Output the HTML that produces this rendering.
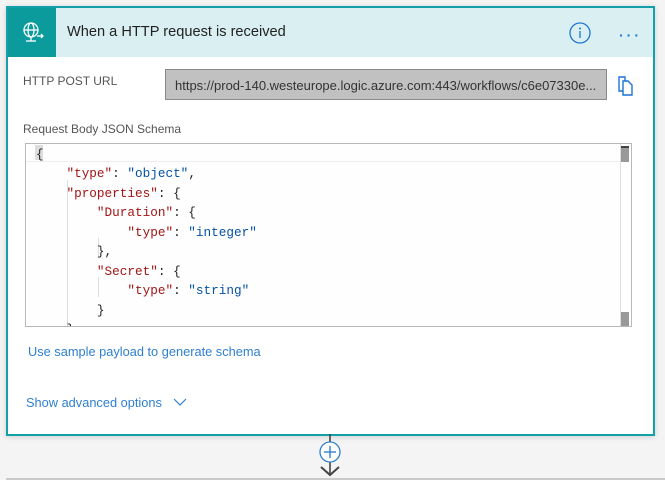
<!DOCTYPE html>
<html><head><style>
body{margin:0;width:665px;height:480px;background:#f4f4f4;position:relative;overflow:hidden;font-family:"Liberation Sans",sans-serif}
.card{position:absolute;left:6px;top:6px;width:645px;height:426px;border:2px solid #12a0aa;background:#fff;box-shadow:0 1px 6px rgba(0,0,0,.15)}
.hdr{position:absolute;left:0;top:0;width:645px;height:49px;background:#d9eff2}
.ico{position:absolute;left:0;top:0;width:48px;height:49px;background:#0b9b9c}
.title{position:absolute;left:59px;top:16px;font-size:14.6px;color:#222}
.lbl{position:absolute;font-size:12px;color:#555}
.url{position:absolute;left:157px;top:61px;width:442px;height:31px;background:#c1c1c1;border:1px solid #8a8a8a;box-sizing:border-box;font-size:13px;color:#333;padding:8px 0 0 9px}
.ed{position:absolute;left:17px;top:135px;width:607px;height:184px;border:1px solid #b8b8b8;box-sizing:border-box;background:#fefefe;overflow:hidden}
.code{position:absolute;left:10px;top:1px;font-family:"Liberation Mono",monospace;font-size:12.7px;line-height:19.45px;white-space:pre;color:#222}
.k{color:#a31515}.s{color:#0451a5}
.link{position:absolute;font-size:12.8px;color:#2f7fcf}
</style></head><body>
<div class="card">
 <div class="hdr">
  <div class="ico"><svg width="48" height="49" viewBox="0 0 48 49" fill="none" stroke="#fff" stroke-width="1.3">
   <circle cx="23" cy="22" r="7"/><ellipse cx="23" cy="22" rx="3" ry="7"/><line x1="16" y1="22" x2="30" y2="22"/><line x1="23" y1="29" x2="23" y2="33"/><line x1="18" y1="33" x2="28" y2="33"/><line x1="29" y1="28" x2="35" y2="28"/><path d="M33 26l2 2-2 2"/></svg></div>
  <div class="title">When a HTTP request is received</div>
  <svg style="position:absolute;left:561px;top:14px" width="22" height="22"><circle cx="11" cy="11" r="10" fill="none" stroke="#1b74d4" stroke-width="1.3"/><circle cx="11" cy="6.5" r="1" fill="#1b74d4"/><line x1="11" y1="9" x2="11" y2="16" stroke="#1b74d4" stroke-width="1.3"/></svg>
  <div style="position:absolute;left:611px;top:19px;color:#1b74d4;font-size:14px;letter-spacing:3px;font-weight:bold">···</div>
 </div>
 <div class="lbl" style="left:15px;top:66px">HTTP POST URL</div>
 <div class="url">https://prod-140.westeurope.logic.azure.com:443/workflows/c6e07330e...</div>
 <svg style="position:absolute;left:609px;top:67px" width="18" height="22" fill="none" stroke="#1b74d4" stroke-width="1.4"><path d="M2 2h6v14H2z"/><path d="M6 6h5l4 4v10H6z" fill="#fff"/></svg>
 <div class="lbl" style="left:15px;top:114px">Request Body JSON Schema</div>
 <div class="ed">
  <div style="position:absolute;left:0;top:0;width:595px;height:17px;border-bottom:1px solid #eee"></div>
  <div style="position:absolute;left:9px;top:1px;width:8px;height:15px;background:#ddd"></div>
  <div style="position:absolute;left:41px;top:36px;width:1px;height:146px;background:#ddd"></div>
  <div style="position:absolute;left:72px;top:94px;width:1px;height:20px;background:#ddd"></div>
  <div style="position:absolute;left:72px;top:133px;width:1px;height:20px;background:#ddd"></div>
  <div class="code">{
    <span class="k">"type"</span>: <span class="s">"object"</span>,
    <span class="k">"properties"</span>: {
        <span class="k">"Duration"</span>: {
            <span class="k">"type"</span>: <span class="s">"integer"</span>
        },
        <span class="k">"Secret"</span>: {
            <span class="k">"type"</span>: <span class="s">"string"</span>
        }
    },</div>
  <div style="position:absolute;left:594px;top:0;width:12px;height:184px;background:#fff;border-left:1px solid #ddd"></div>
  <div style="position:absolute;left:595px;top:2px;width:8px;height:14px;background:#999;border-top:2px solid #444"></div>
  <div style="position:absolute;left:595px;top:168px;width:8px;height:15px;background:#999"></div>
 </div>
 <div class="link" style="left:20px;top:336px">Use sample payload to generate schema</div>
 <div class="link" style="left:18px;top:387px">Show advanced options</div>
 <svg style="position:absolute;left:165px;top:389px" width="14" height="10" fill="none" stroke="#2f7fcf" stroke-width="1.2"><path d="M1 2l6 6 6-6"/></svg>
</div>
<svg style="position:absolute;left:0;top:434px" width="665" height="46">
 <line x1="330" y1="0" x2="330" y2="41" stroke="#444" stroke-width="1.6"/>
 <circle cx="330" cy="18" r="10" fill="#fff" stroke="#2f7fcf" stroke-width="1.3"/>
 <line x1="324" y1="18" x2="336" y2="18" stroke="#2f7fcf" stroke-width="1.4"/><line x1="330" y1="12" x2="330" y2="24" stroke="#2f7fcf" stroke-width="1.4"/>
 <path d="M321 33l9 8 9-8" fill="none" stroke="#444" stroke-width="2"/>
 <line x1="6" y1="45" x2="665" y2="45" stroke="#bbb" stroke-width="1.5"/>
</svg>
</body></html>
